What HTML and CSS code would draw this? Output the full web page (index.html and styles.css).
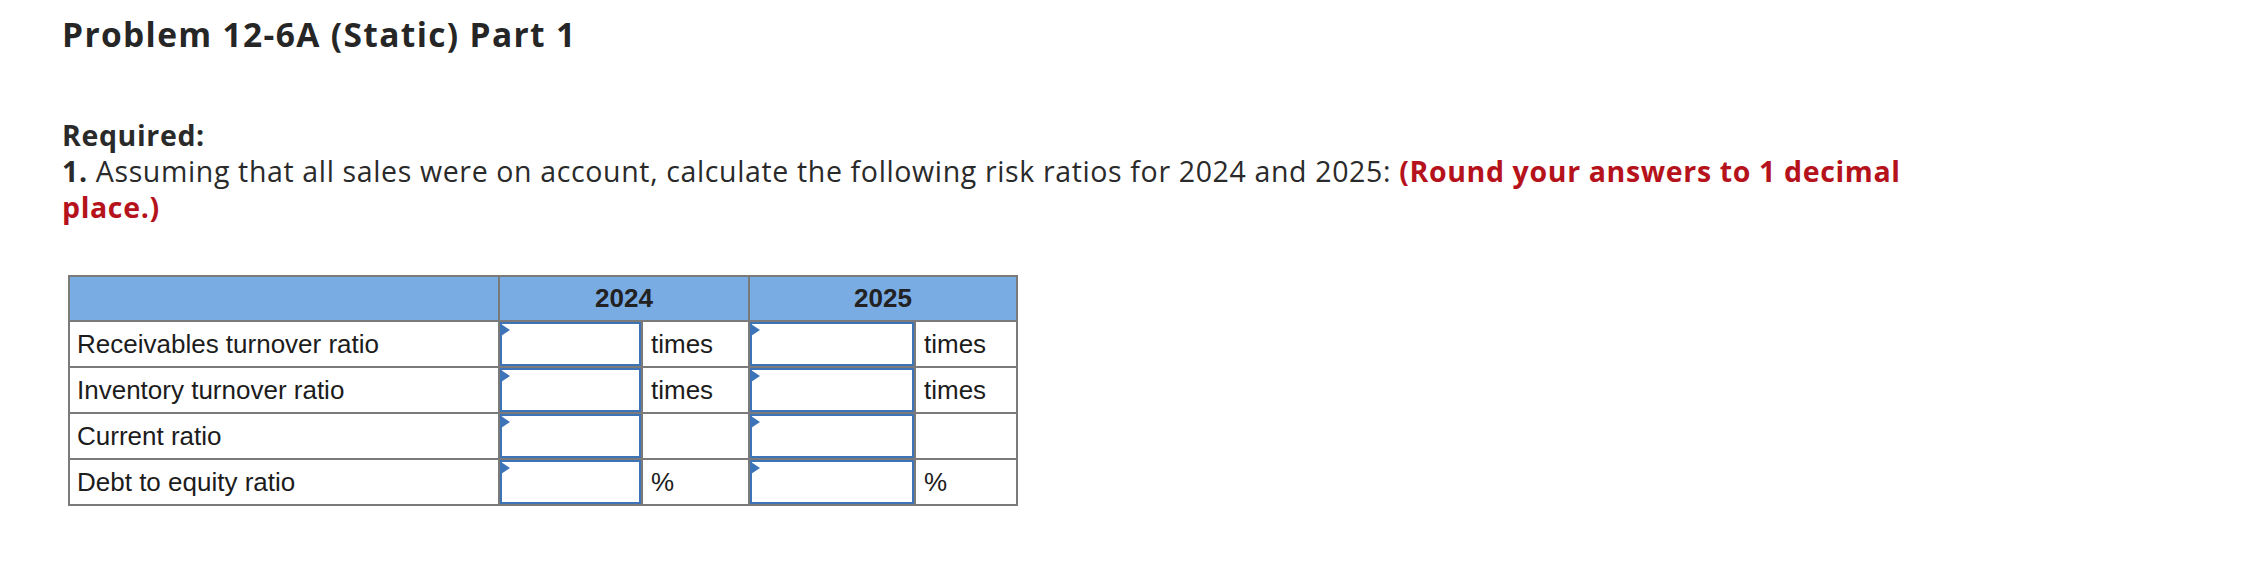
FILE: index.html
```html
<!DOCTYPE html>
<html lang="en">
<head>
<meta charset="utf-8">
<title>Problem 12-6A (Static) Part 1</title>
<link rel="stylesheet" href="styles.css">
</head>
<body>
<main class="page">
  <h1 class="title">Problem 12-6A (Static) Part 1</h1>
  <section class="question">
    <p class="required">Required:</p>
    <p class="instructions"><strong>1.</strong> Assuming that all sales were on account, calculate the following risk ratios for 2024 and 2025: <strong class="note">(Round your answers to 1 decimal place.)</strong></p>
  </section>
  <div class="ratio-table" role="table">
    <div class="cell head"></div>
    <div class="cell head year">2024</div>
    <div class="cell head year">2025</div>

    <div class="cell label">Receivables turnover ratio</div>
    <div class="cell entry"><input type="text" aria-label="Receivables turnover ratio 2024"></div>
    <div class="cell unit">times</div>
    <div class="cell entry"><input type="text" aria-label="Receivables turnover ratio 2025"></div>
    <div class="cell unit">times</div>

    <div class="cell label">Inventory turnover ratio</div>
    <div class="cell entry"><input type="text" aria-label="Inventory turnover ratio 2024"></div>
    <div class="cell unit">times</div>
    <div class="cell entry"><input type="text" aria-label="Inventory turnover ratio 2025"></div>
    <div class="cell unit">times</div>

    <div class="cell label">Current ratio</div>
    <div class="cell entry"><input type="text" aria-label="Current ratio 2024"></div>
    <div class="cell unit"></div>
    <div class="cell entry"><input type="text" aria-label="Current ratio 2025"></div>
    <div class="cell unit"></div>

    <div class="cell label">Debt to equity ratio</div>
    <div class="cell entry"><input type="text" aria-label="Debt to equity ratio 2024"></div>
    <div class="cell unit">%</div>
    <div class="cell entry"><input type="text" aria-label="Debt to equity ratio 2025"></div>
    <div class="cell unit">%</div>
  </div>
</main>
</body>
</html>
```

FILE: styles.css
```css
* { box-sizing: border-box; }

html, body {
  margin: 0;
  padding: 0;
  background: #ffffff;
}

.page {
  padding: 15px 0 0 62px;
  font-family: "Open Sans", Lato, "Liberation Sans", sans-serif;
  color: #2a2a2a;
}

.title {
  margin: 0;
  font-size: 33.5px;
  line-height: 38px;
  font-weight: 700;
  letter-spacing: 1.35px;
  color: #262626;
}

.question {
  margin-top: 64px;
  width: 1880px;
  font-size: 28.5px;
  line-height: 36px;
  letter-spacing: 0.64px;
}

.question p {
  margin: 0;
}

.required {
  font-weight: 700;
}

.instructions strong {
  font-weight: 700;
}

.note {
  color: #b5121b;
}

.ratio-table {
  margin-top: 50px;
  margin-left: 6px;
  display: grid;
  grid-template-columns: 428px 141px 105px 164px 100px;
  grid-template-rows: 43px repeat(4, 44px);
  gap: 2px;
  padding: 2px;
  width: max-content;
  background: #7a7a7a;
  font-family: "Liberation Sans", Arial, sans-serif;
  font-size: 26px;
  letter-spacing: 0;
  color: #1c1c1c;
}

.cell {
  background: #ffffff;
  display: flex;
  align-items: center;
  position: relative;
}

.head {
  background: #79ace3;
}

.year {
  grid-column: span 2;
  justify-content: center;
  font-weight: 700;
  color: #222222;
}

.label {
  padding-left: 7px;
}

.unit {
  padding-left: 8px;
}

.entry input {
  display: block;
  width: 100%;
  height: 100%;
  margin: 0;
  padding: 0 8px;
  border: 2px solid #3d74b8;
  border-radius: 0;
  background: #ffffff;
  font: inherit;
  outline: none;
}

.entry::before {
  content: "";
  position: absolute;
  top: 2px;
  left: 1px;
  width: 0;
  height: 0;
  border-left: 9px solid #3d74b8;
  border-top: 6px solid transparent;
  border-bottom: 6px solid transparent;
}
```
